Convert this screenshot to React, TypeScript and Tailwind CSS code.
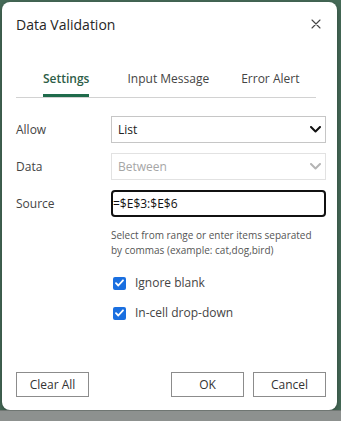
import React from 'react';

const Chevron = ({ color }: { color: string }) => (
  <svg width="11" height="7" viewBox="0 0 11 7" fill="none">
    <path d="M1 1l4.5 4.5L10 1" stroke={color} strokeWidth="2" strokeLinecap="round" strokeLinejoin="round" />
  </svg>
);

const Check = () => (
  <span className="w-[13px] h-[13px] rounded-[2px] bg-[#1a6fe0] flex items-center justify-center">
    <svg width="9" height="8" viewBox="0 0 9 8" fill="none">
      <path d="M1 4.2l2.3 2.3L8 1.3" stroke="white" strokeWidth="1.8" strokeLinecap="round" strokeLinejoin="round" />
    </svg>
  </span>
);

export default function App() {
  return (
    <div className="w-[341px] h-[421px] bg-[#466b58] flex flex-col overflow-hidden font-['Open_Sans',sans-serif] text-[#333]">
      <div className="ml-[2px] mt-[2px] w-[335px] h-[408px] bg-white rounded-[8px] flex flex-col shrink-0 shadow-[0_2px_6px_rgba(0,0,0,0.35)]">
        {/* Header */}
        <div className="h-[44px] flex items-center justify-between pl-[14px] pr-[16px]">
          <span className="text-[14px] text-[#262626]">Data Validation</span>
          <svg width="10" height="10" viewBox="0 0 10 10" fill="none">
            <path d="M1 1l8 8M9 1l-8 8" stroke="#444" strokeWidth="1.1" strokeLinecap="round" />
          </svg>
        </div>

        {/* Tabs */}
        <div className="mt-[23px] ml-[14px] mr-[21px] border-b border-[#d2d2d2] flex pl-[27px] text-[12px]">
          <div className="flex flex-col">
            <span className="leading-[20px] font-semibold text-[#2d5d47]">Settings</span>
            <span className="mt-[5px] h-[3px] bg-[#1f6b4b]" />
          </div>
          <span className="ml-[38px] leading-[20px] text-[#444]">Input Message</span>
          <span className="ml-[32px] leading-[20px] text-[#444]">Error Alert</span>
        </div>

        {/* Form */}
        <div className="mt-[18px] pl-[14px] pr-[11px] flex flex-col gap-[10px] text-[12px]">
          <div className="flex items-center">
            <span className="w-[95px] text-[#444]">Allow</span>
            <div className="flex-1 h-[27px] border border-[#c6c6c6] flex items-center justify-between pl-[6px] pr-[4px]">
              <span className="text-[#222]">List</span>
              <Chevron color="#111" />
            </div>
          </div>
          <div className="flex items-center">
            <span className="w-[95px] text-[#444]">Data</span>
            <div className="flex-1 h-[27px] border border-[#e2e2e2] flex items-center justify-between pl-[6px] pr-[4px]">
              <span className="text-[#a6a6a6]">Between</span>
              <Chevron color="#b4b4b4" />
            </div>
          </div>
          <div className="flex items-center">
            <span className="w-[95px] text-[#444]">Source</span>
            <div className="flex-1 h-[27px] border-2 border-[#111] rounded-[4px] flex items-center">
              <span className="text-[#111]">=$E$3:$E$6</span>
            </div>
          </div>
        </div>

        <div className="mt-[11px] ml-[109px] w-[206px] text-[10px] leading-[15px] text-[#555]">
          Select from range or enter items separated by commas (example: cat,dog,bird)
        </div>

        <div className="mt-[15px] ml-[111px] flex flex-col gap-[10px] text-[12px] text-[#444]">
          <label className="h-[20px] flex items-center gap-[9px]">
            <Check />
            <span>Ignore blank</span>
          </label>
          <label className="h-[20px] flex items-center gap-[9px]">
            <Check />
            <span>In-cell drop-down</span>
          </label>
        </div>

        {/* Buttons */}
        <div className="mt-auto mb-[13px] pl-[14px] pr-[11px] flex items-center text-[12px] text-[#333]">
          <button className="w-[73px] h-[25px] border border-[#8c8c8c]">Clear All</button>
          <div className="ml-auto flex gap-[9px]">
            <button className="w-[73px] h-[25px] border border-[#8c8c8c]">OK</button>
            <button className="w-[73px] h-[25px] border border-[#8c8c8c]">Cancel</button>
          </div>
        </div>
      </div>
      <div className="flex-1 bg-[#8d918f] border-t border-[#6f7672]" />
    </div>
  );
}
